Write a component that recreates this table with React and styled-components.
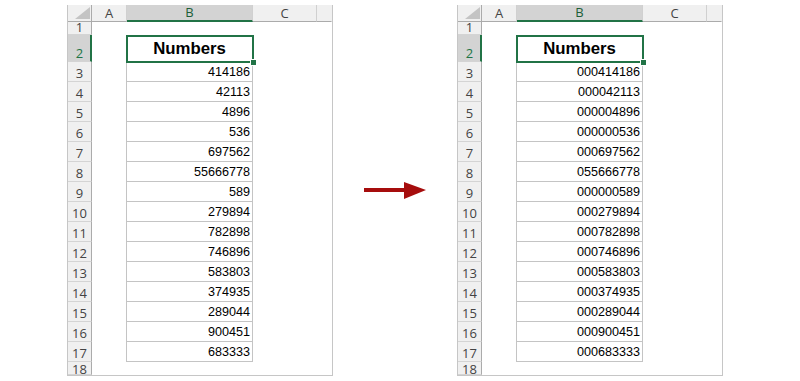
import React from "react";
import styled, { createGlobalStyle, css } from "styled-components";

const GlobalStyle = createGlobalStyle`
  html, body {
    margin: 0;
    padding: 0;
    background: #ffffff;
  }
  body {
    font-family: "Liberation Sans", Arial, sans-serif;
  }
`;

const GREEN = "#217346";

const Page = styled.div`
  width: 800px;
  height: 381px;
  display: flex;
  align-items: center;
  padding: 5px 0 5px 67px;
  box-sizing: border-box;
`;

const Sheet = styled.div`
  width: 266px;
  box-sizing: border-box;
  border: 1px solid #c6c6c6;
  border-top: none;
  display: grid;
  grid-template-columns: 24px 35px 126px 64px 15px;
  grid-template-rows: 17px 13px 27px repeat(15, 20px) 13px;
  background: #ffffff;
`;

const headBase = css`
  box-sizing: border-box;
  background: #f0f0f0;
  font-family: "Open Sans", "Liberation Sans", sans-serif;
  font-size: 13px;
  color: #444444;
  display: flex;
  justify-content: center;
`;

const Corner = styled.div`
  ${headBase};
  border-right: 1px solid #ababab;
  border-bottom: 1px solid #ababab;
  align-items: flex-end;
  justify-content: flex-end;
  padding: 0 1px 2px 0;
`;

const ColHead = styled.div`
  ${headBase};
  align-items: center;
  line-height: 1;
  border-right: 1px solid ${(p) => (p.$last ? "transparent" : "#d0d0d0")};
  border-bottom: ${(p) => (p.$selected ? `2px solid ${GREEN}` : "1px solid #ababab")};
  background: ${(p) => (p.$selected ? "#d3d3d3" : "#f0f0f0")};
  color: ${(p) => (p.$selected ? "#1d5e39" : "#444444")};
`;

const RowHead = styled.div`
  ${headBase};
  align-items: ${(p) => (p.$top ? "flex-start" : "flex-end")};
  padding-top: ${(p) => (p.$top ? "1px" : "0")};
  padding-bottom: ${(p) => (p.$short || p.$top ? "0" : "1px")};
  line-height: 1;
  overflow: hidden;
  border-bottom: 1px solid #d4d4d4;
  border-right: ${(p) => (p.$selected ? `2px solid ${GREEN}` : "1px solid #ababab")};
  background: ${(p) => (p.$selected ? "#d3d3d3" : "#f0f0f0")};
  color: ${(p) => (p.$selected ? GREEN : "#444444")};
  padding-left: ${(p) => (p.$selected ? "1px" : "0")};
`;

const Blank = styled.div``;

const Cell = styled.div`
  box-sizing: border-box;
  margin-left: -1px;
  border-left: 1px solid #c4c4c4;
  border-right: 1px solid #c4c4c4;
  border-bottom: 1px solid #c4c4c4;
  display: flex;
  align-items: center;
  justify-content: flex-end;
  padding-right: 2px;
  font-size: 12.6px;
  color: #000000;
`;

const TitleCell = styled.div`
  position: relative;
  margin-left: -1px;
  display: flex;
  align-items: center;
  justify-content: center;
  font-weight: bold;
  font-size: 16.8px;
  color: #000000;
  padding-top: 1px;

  &::after {
    content: "";
    position: absolute;
    inset: 0 -1px -1px 0;
    border: 2px solid ${GREEN};
  }
`;

const FillHandle = styled.span`
  position: absolute;
  right: -4px;
  bottom: -4px;
  width: 5px;
  height: 5px;
  background: ${GREEN};
  border: 1px solid #ffffff;
  z-index: 2;
`;

const ArrowBox = styled.div`
  width: 124px;
  display: flex;
  justify-content: center;
  align-items: center;
`;

const values = [
  414186, 42113, 4896, 536, 697562, 55666778, 589, 279894, 782898, 746896,
  583803, 374935, 289044, 900451, 683333,
];

function CornerMark() {
  return (
    <svg width="15" height="12" viewBox="0 0 15 12">
      <polygon points="15,0 15,12 0,12" fill="#c4c4c4" />
    </svg>
  );
}

function Spreadsheet({ format }) {
  return (
    <Sheet>
      <Corner>
        <CornerMark />
      </Corner>
      <ColHead>A</ColHead>
      <ColHead $selected>B</ColHead>
      <ColHead>C</ColHead>
      <ColHead $last />

      <RowHead $short>1</RowHead>
      <Blank />
      <Blank />
      <Blank />
      <Blank />

      <RowHead $selected>2</RowHead>
      <Blank />
      <TitleCell>
        Numbers
        <FillHandle />
      </TitleCell>
      <Blank />
      <Blank />

      {values.map((v, i) => (
        <React.Fragment key={i}>
          <RowHead>{i + 3}</RowHead>
          <Blank />
          <Cell>{format(v)}</Cell>
          <Blank />
          <Blank />
        </React.Fragment>
      ))}

      <RowHead $top>18</RowHead>
      <Blank />
      <Blank />
      <Blank />
      <Blank />
    </Sheet>
  );
}

function Arrow() {
  return (
    <svg width="62" height="17" viewBox="0 0 62 17">
      <rect x="0" y="6" width="42" height="4" fill="#a60d0d" />
      <polygon points="40,0 62,8 40,17" fill="#a60d0d" />
    </svg>
  );
}

export default function App() {
  return (
    <>
      <GlobalStyle />
      <Page>
        <Spreadsheet format={(v) => String(v)} />
        <ArrowBox>
          <Arrow />
        </ArrowBox>
        <Spreadsheet format={(v) => String(v).padStart(9, "0")} />
      </Page>
    </>
  );
}
